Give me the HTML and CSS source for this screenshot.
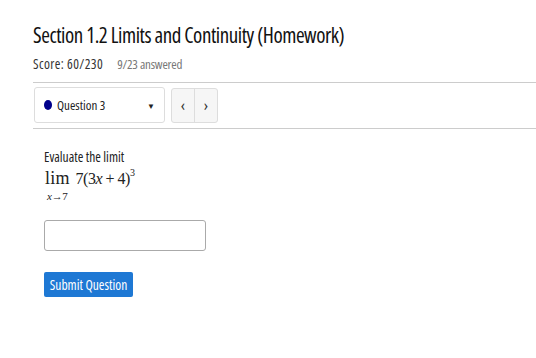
FILE: index.html
```html
<!DOCTYPE html>
<html>
<head>
<meta charset="utf-8">
<link rel="stylesheet" href="styles.css">
</head>
<body>
<div class="page">
  <h1 class="title">Section 1.2 Limits and Continuity (Homework)</h1>
  <div class="score"><span class="pts">Score: 60/230</span><span class="ans">9/23 answered</span></div>
  <div class="navbar">
    <div class="select"><span class="dot"></span><span class="qlabel">Question 3</span><span class="caret">&#9660;</span></div>
    <div class="arrows"><span class="arr">&#8249;</span><span class="arr">&#8250;</span></div>
  </div>
  <div class="question">
    <div class="prompt">Evaluate the limit</div>
    <div class="math">
      <div class="limblock"><span class="lim">lim</span><span class="sub"><i>x</i>&#8594;7</span></div>
      <span class="expr">7(3<i>x</i> + 4)<sup>3</sup></span>
    </div>
    <div class="answer"></div>
    <button class="submit">Submit Question</button>
  </div>
</div>
</body>
</html>
```
FILE: styles.css
```css
html, body { margin: 0; padding: 0; background: #fff; }
body { font-family: "Open Sans", "Roboto Condensed", sans-serif; font-stretch: condensed; color: #222; }
.page { padding: 21px 0 0 33px; }
.title { margin: 0; font-size: 21px; font-weight: 500; line-height: 28px; color: #111; letter-spacing: -0.45px; }
.score { margin-top: 6px; font-size: 13px; line-height: 18px; display: flex; gap: 14px; }
.pts { color: #333; font-size: 13.5px; letter-spacing: 0.4px; }
.ans { color: #777; font-size: 13px; letter-spacing: -0.2px; }
.navbar { margin-top: 9px; border-top: 1px solid #ccc; border-bottom: 1px solid #ccc; padding: 4px 0 5px 1px; display: flex; gap: 6px; align-items: center; }
.select { width: 131px; height: 36px; box-sizing: border-box; border: 1px solid #ddd; border-radius: 3px; display: flex; align-items: center; padding: 0 9px 0 9px; font-size: 13px; color: #222; }
.dot { width: 8px; height: 10px; border-radius: 50%; background: #00008b; margin-right: 5px; }
.qlabel { flex: 1; }
.caret { font-size: 8px; color: #222; }
.arrows { display: flex; height: 35px; box-sizing: border-box; border: 1px solid #ddd; border-radius: 3px; background: #f6f6f6; }
.arr { width: 22px; display: flex; align-items: center; justify-content: center; font-size: 16px; color: #333; }
.arr + .arr { border-left: 1px solid #ddd; }
.question { padding: 19px 0 0 11px; }
.prompt { font-size: 13.5px; line-height: 18px; color: #222; }
.math { display: flex; align-items: flex-start; gap: 6px; font-family: "Liberation Serif", "DejaVu Serif", serif; font-stretch: normal; font-size: 16px; color: #222; margin-top: 3px; }
.limblock { display: flex; flex-direction: column; align-items: center; padding-left: 1px; }
.lim { font-size: 18px; line-height: 18px; letter-spacing: 0.2px; }
.sub { font-size: 11px; line-height: 12px; margin-top: 3px; letter-spacing: -0.3px; }
.expr { line-height: 18px; letter-spacing: -0.5px; padding-top: 1px; }
.expr sup { font-size: 10px; vertical-align: 8px; line-height: 0; }
.answer { margin-top: 18px; width: 162px; height: 31px; box-sizing: border-box; border: 1px solid #aaa; border-radius: 3px; }
.submit { display: block; margin-top: 21px; width: 89px; height: 25px; padding: 0; border: none; border-radius: 2px; background: #1e78d4; color: #fff; font-family: inherit; font-stretch: condensed; font-size: 13.5px; }
```
